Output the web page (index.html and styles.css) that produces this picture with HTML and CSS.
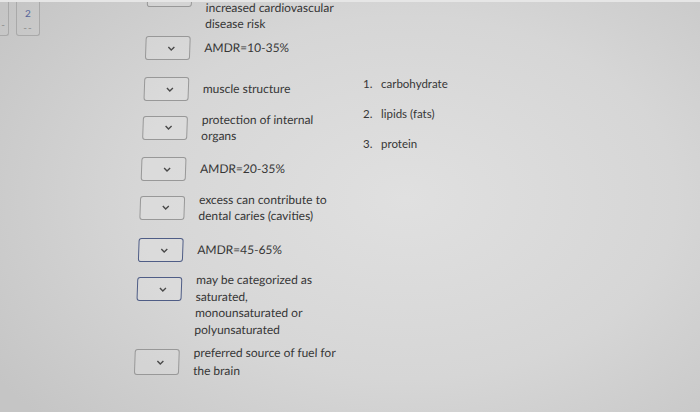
FILE: index.html
```html
<!DOCTYPE html>
<html lang="en">

<head>
    <meta charset="UTF-8">
    <meta name="viewport" content="width=device-width, initial-scale=1.0">
    <title>Macronutrients - Matching</title>
    <link rel="stylesheet" href="styles.css">
</head>

<body>
    <div class="page">
        <!-- question navigation tabs -->
        <div class="qnav">
            <div class="qtab qtab-prev"><span class="qdash">-</span></div>
            <div class="qtab">
                <span class="qnum">2</span>
                <span class="qdash">--</span>
            </div>
        </div>

        <!-- matching statements -->
        <div class="rows">
            <div class="match match-cut">
                <div class="pick"></div>
                <p class="label">increased cardiovascular disease risk</p>
            </div>
            <div class="match">
                <div class="pick"><svg width="8" height="5" viewBox="0 0 8 5"><polyline points="1,1 4,4 7,1" /></svg></div>
                <p class="label">AMDR=10-35%</p>
            </div>
            <div class="match">
                <div class="pick"><svg width="8" height="5" viewBox="0 0 8 5"><polyline points="1,1 4,4 7,1" /></svg></div>
                <p class="label">muscle structure</p>
            </div>
            <div class="match">
                <div class="pick"><svg width="8" height="5" viewBox="0 0 8 5"><polyline points="1,1 4,4 7,1" /></svg></div>
                <p class="label">protection of internal organs</p>
            </div>
            <div class="match">
                <div class="pick"><svg width="8" height="5" viewBox="0 0 8 5"><polyline points="1,1 4,4 7,1" /></svg></div>
                <p class="label">AMDR=20-35%</p>
            </div>
            <div class="match">
                <div class="pick"><svg width="8" height="5" viewBox="0 0 8 5"><polyline points="1,1 4,4 7,1" /></svg></div>
                <p class="label">excess can contribute to dental caries (cavities)</p>
            </div>
            <div class="match">
                <div class="pick pick-focus"><svg width="8" height="5" viewBox="0 0 8 5"><polyline points="1,1 4,4 7,1" /></svg></div>
                <p class="label">AMDR=45-65%</p>
            </div>
            <div class="match match-top">
                <div class="pick pick-focus"><svg width="8" height="5" viewBox="0 0 8 5"><polyline points="1,1 4,4 7,1" /></svg></div>
                <p class="label">may be categorized as saturated, monounsaturated or polyunsaturated</p>
            </div>
            <div class="match match-last">
                <div class="pick"><svg width="8" height="5" viewBox="0 0 8 5"><polyline points="1,1 4,4 7,1" /></svg></div>
                <p class="label">preferred source of fuel for the brain</p>
            </div>
        </div>

        <!-- answer options -->
        <ol class="options">
            <li><span class="num">1.</span>carbohydrate</li>
            <li><span class="num">2.</span>lipids (fats)</li>
            <li><span class="num">3.</span>protein</li>
        </ol>
    </div>
</body>

</html>
```

FILE: styles.css
```css
/* Page */
body {
    margin: 0;
    height: 412px;
    overflow: hidden;
    font-family: Lato, "Open Sans", sans-serif;
    font-size: 12px;
    color: #363636;
    background: radial-gradient(ellipse 70% 80% at 58% 48%, #e0e0e0 0%, #d6d6d6 55%, #c5c5c5 100%);
    border-top: 2px solid #e6e6e6;
    box-sizing: border-box;
}

.page {
    display: grid;
    grid-template-columns: 147px 216px 1fr;
    height: 100%;
}

/* Question navigation */
.qnav {
    display: flex;
    gap: 7px;
    align-items: flex-start;
    margin-left: -11px;
}

.qtab {
    width: 24px;
    height: 34px;
    border: 1px solid #a9a9a9;
    border-top: none;
    border-radius: 0 0 3px 3px;
    display: flex;
    flex-direction: column;
    align-items: center;
    padding-top: 5px;
    box-sizing: border-box;
    font-size: 10px;
}

.qtab-prev {
    width: 20px;
    padding-top: 14px;
    align-items: flex-end;
    padding-right: 2px;
}

.qnum {
    color: #55649a;
    line-height: 12px;
}

.qdash {
    color: #8a8a8a;
    line-height: 10px;
    margin-top: 3px;
    letter-spacing: 1px;
}

/* Matching rows */
.rows {
    display: flex;
    flex-direction: column;
    gap: 13px;
    margin-top: -2px;
    transform: skewX(-2deg);
    transform-origin: 0 0;
}

.match {
    display: flex;
    align-items: center;
    gap: 14px;
}

/* the page is photographed at an angle, so row spacing is uneven */
.match:nth-child(3) { margin-top: 4px; }
.match:nth-child(4) { margin-top: -2px; }
.match:nth-child(5) { margin-top: 1px; }
.match:nth-child(6) { margin-top: -2px; }
.match:nth-child(7) { margin-top: 2px; }
.match:nth-child(8) { margin-top: -3px; }
.match:nth-child(9) { margin-top: -7px; }

.match-cut {
    align-items: flex-start;
    margin-bottom: -8px;
}

.match-cut .pick {
    margin-top: -17px;
}

.match-top {
    align-items: flex-start;
}

.match-top .label {
    line-height: 16.5px;
}

.match-top .pick {
    margin-top: 5px;
}

.match-last .label {
    line-height: 18px;
}

.match-last .pick {
    height: 26px;
}

.pick {
    flex: none;
    width: 45px;
    height: 24px;
    border: 1px solid #989898;
    border-radius: 3px;
    background-color: rgba(255, 255, 255, 0.12);
    box-sizing: border-box;
    display: flex;
    align-items: center;
    justify-content: flex-end;
    padding-right: 14px;
}

.pick svg polyline {
    fill: none;
    stroke: #4a4a4a;
    stroke-width: 1.4;
}

.pick-focus {
    border: 1.5px solid #4f5d86;
}

.label {
    margin: 0;
    width: 148px;
    line-height: 15.5px;
}

/* Options list */
.options {
    list-style: none;
    margin: 0;
    padding: 74px 0 0;
    display: flex;
    flex-direction: column;
    gap: 14.5px;
    line-height: 15.5px;
    font-size: 11.5px;
}

.num {
    display: inline-block;
    width: 18px;
}
```
